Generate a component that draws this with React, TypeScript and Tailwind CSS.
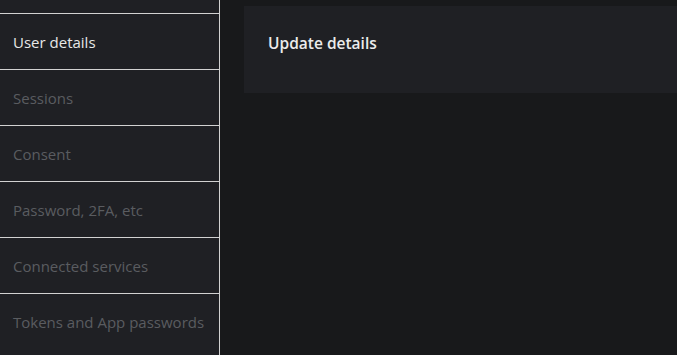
const items = [
  { label: 'User details', active: true },
  { label: 'Sessions' },
  { label: 'Consent' },
  { label: 'Password, 2FA, etc' },
  { label: 'Connected services' },
  { label: 'Tokens and App passwords' },
];

export default function App() {
  return (
    <div
      className="flex h-[355px] w-full overflow-hidden bg-[#18191b]"
      style={{ fontFamily: '"Open Sans", "Noto Sans", sans-serif' }}
    >
      <nav className="w-[220px] shrink-0 border-r border-[#d2d2d2] bg-[#1f2024]">
        <div className="h-[14px] border-b border-[#d2d2d2]" />
        {items.map((item) => (
          <div
            key={item.label}
            className={`flex h-[56px] items-center border-b border-[#d2d2d2] px-[13px] pt-[1px] text-[15px] last:border-b-0 ${
              item.active ? 'text-[#e8e8e8]' : 'text-[#5a5c60]'
            }`}
          >
            {item.label}
          </div>
        ))}
      </nav>

      <main className="flex-1 pl-6 pt-[6px]">
        <div className="h-[87px] bg-[#1f2024] px-6 pt-[25px]">
          <h2 className="text-[15.5px] font-semibold leading-6 text-[#ececec]">Update details</h2>
        </div>
      </main>
    </div>
  );
}
